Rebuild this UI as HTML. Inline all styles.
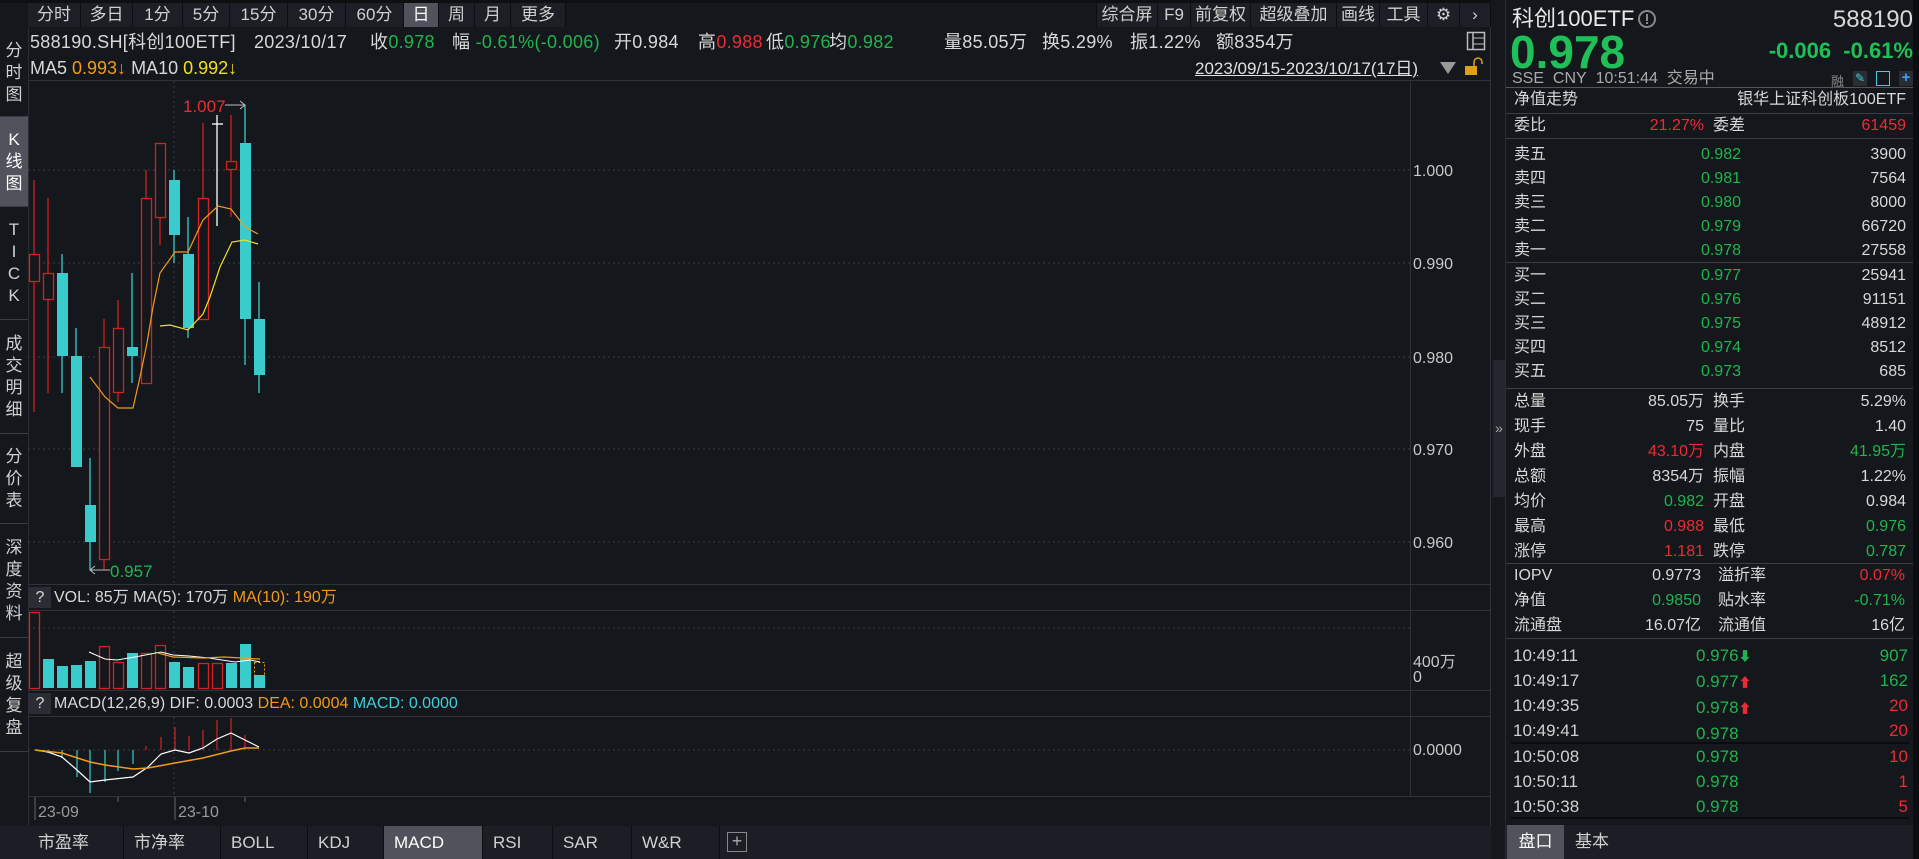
<!DOCTYPE html>
<html><head><meta charset="utf-8"><style>
*{margin:0;padding:0;box-sizing:border-box}
body{width:1919px;height:859px;background:#14171c;overflow:hidden;position:relative;font-family:"Liberation Sans","Noto Sans CJK SC",sans-serif;color:#d8d8d8}
.a{position:absolute;white-space:nowrap}
.tab{position:absolute;top:3px;height:24px;background:#1c1f25;border-right:1px solid #0c0d10;font-size:17px;line-height:24px;text-align:center;color:#d0d0d0}
.side{position:absolute;left:0;width:28px;border-bottom:1px solid #3a3d44;font-size:17px;line-height:22px;text-align:center;color:#d0d0d0;display:flex;flex-direction:column;justify-content:center}
.r{color:#ee2a35}.g{color:#1fb54c}.o{color:#f39a1a}.y{color:#f0e020}.c{color:#3fd0d8}.w{color:#e8e8e8}.gr{color:#9a9a9a}
.rp{font-size:16px;line-height:20px}
.hl{position:absolute;height:1px;background:#3a3d44}
.bt{position:absolute;top:826px;height:33px;font-size:17px;line-height:33px;background:#1b1e24;border-right:1px solid #0c0d10;padding-left:10px;color:#d0d0d0}
.inf{position:absolute;white-space:nowrap;top:31px;font-size:18px;line-height:22px;letter-spacing:0.3px}
</style></head><body>

<div class="a" style="left:0;top:0;width:1491px;height:3px;background:#0e0f12"></div>
<div class="tab" style="left:28px;width:53px">分时</div>
<div class="tab" style="left:81px;width:52px">多日</div>
<div class="tab" style="left:133px;width:50px">1分</div>
<div class="tab" style="left:183px;width:47px">5分</div>
<div class="tab" style="left:230px;width:58px">15分</div>
<div class="tab" style="left:288px;width:58px">30分</div>
<div class="tab" style="left:346px;width:58px">60分</div>
<div class="tab" style="left:404px;width:35px;background:#50535b;color:#fff">日</div>
<div class="tab" style="left:439px;width:36px">周</div>
<div class="tab" style="left:475px;width:36px">月</div>
<div class="tab" style="left:511px;width:55px">更多</div>

<div class="tab" style="left:1096px;width:62px;border-left:1px solid #0c0d10">综合屏</div>
<div class="tab" style="left:1158px;width:33px">F9</div>
<div class="tab" style="left:1191px;width:60px">前复权</div>
<div class="tab" style="left:1251px;width:86px">超级叠加</div>
<div class="tab" style="left:1337px;width:43px">画线</div>
<div class="tab" style="left:1380px;width:48px">工具</div>
<div class="tab" style="left:1428px;width:32px">⚙</div>
<div class="tab" style="left:1460px;width:31px">›</div>

<div class="side" style="top:30px;height:87px">分<br>时<br>图</div>
<div class="side" style="top:117px;height:90px;background:#50535b;color:#fff">K<br>线<br>图</div>
<div class="side" style="top:207px;height:113px">T<br>I<br>C<br>K</div>
<div class="side" style="top:320px;height:114px">成<br>交<br>明<br>细</div>
<div class="side" style="top:434px;height:90px">分<br>价<br>表</div>
<div class="side" style="top:524px;height:114px">深<br>度<br>资<br>料</div>
<div class="side" style="top:638px;height:114px">超<br>级<br>复<br>盘</div>
<div class="a" style="left:28px;top:28px;width:1px;height:798px;background:#2a2d34"></div>

<div class="inf" style="left:30px">588190.SH[科创100ETF]</div>
<div class="inf" style="left:254px">2023/10/17</div>
<div class="inf" style="left:370px">收<span class="g">0.978</span></div>
<div class="inf" style="left:452px">幅 <span class="g">-0.61%(-0.006)</span></div>
<div class="inf" style="left:614px">开0.984</div>
<div class="inf" style="left:698px">高<span class="r">0.988</span></div>
<div class="inf" style="left:766px">低<span class="g">0.976</span></div>
<div class="inf" style="left:829px">均<span class="g">0.982</span></div>
<div class="inf" style="left:944px">量85.05万</div>
<div class="inf" style="left:1042px">换5.29%</div>
<div class="inf" style="left:1130px">振1.22%</div>
<div class="inf" style="left:1216px">额8354万</div>
<div class="a" style="top:57px;font-size:18px;line-height:22px;left:30px">MA5 <span class="o">0.993↓</span> MA10 <span class="y">0.992↓</span></div>
<div class="a" style="top:59px;font-size:17px;line-height:20px;left:1195px;text-decoration:underline;color:#e0e0e0">2023/09/15-2023/10/17(17日)</div>

<svg class="a" style="left:0;top:0" width="1491" height="859">
 <rect x="1467.5" y="32.5" width="17" height="17" fill="none" stroke="#bbb" stroke-width="1.5"/><line x1="1473" y1="33" x2="1473" y2="49" stroke="#bbb" stroke-width="1.5"/><line x1="1473" y1="38" x2="1484" y2="38" stroke="#bbb"/><line x1="1473" y1="44" x2="1484" y2="44" stroke="#bbb"/>
 <polygon points="1440,62 1456,62 1448,74" fill="#999"/>
 <rect x="1465" y="66" width="12" height="9" fill="#e0a010"/><path d="M1474 66 v-4 a4 4 0 0 1 8 0 v2" fill="none" stroke="#e0a010" stroke-width="1.5"/>
 <g stroke="#2f323a" stroke-width="1">
  <line x1="28" y1="80.5" x2="1491" y2="80.5"/>
  <line x1="1410.5" y1="80" x2="1410.5" y2="796"/>
  <line x1="28" y1="584.5" x2="1491" y2="584.5"/>
  <line x1="28" y1="610.5" x2="1491" y2="610.5"/>
  <line x1="28" y1="690.5" x2="1491" y2="690.5"/>
  <line x1="28" y1="716.5" x2="1491" y2="716.5"/>
  <line x1="28" y1="796.5" x2="1491" y2="796.5"/>
  <line x1="1490.5" y1="27" x2="1490.5" y2="859"/>
 </g>
 <g stroke="#3a3d44" stroke-dasharray="2,3">
  <line x1="28" y1="170" x2="1410" y2="170"/><line x1="28" y1="263" x2="1410" y2="263"/><line x1="28" y1="357" x2="1410" y2="357"/><line x1="28" y1="449" x2="1410" y2="449"/><line x1="28" y1="542" x2="1410" y2="542"/>
  <line x1="174" y1="81" x2="174" y2="584"/><line x1="174" y1="611" x2="174" y2="690"/><line x1="174" y1="717" x2="174" y2="796"/>
  <line x1="28" y1="628" x2="1410" y2="628"/><line x1="28" y1="750" x2="1410" y2="750"/>
 </g>
 <g stroke-width="1.3">
  <line x1="34" y1="180" x2="34" y2="412" stroke="#d42020"/><rect x="29.5" y="254.5" width="10" height="27" fill="#14171c" stroke="#d42020"/>
  <line x1="48" y1="198" x2="48" y2="393" stroke="#d42020"/><rect x="43.5" y="273.5" width="10" height="26" fill="#14171c" stroke="#d42020"/>
  <line x1="62" y1="254" x2="62" y2="393" stroke="#3acccc"/><rect x="57" y="273" width="11" height="83" fill="#3acccc"/>
  <line x1="76" y1="328" x2="76" y2="467" stroke="#3acccc"/><rect x="71" y="356" width="11" height="111" fill="#3acccc"/>
  <line x1="90" y1="458" x2="90" y2="570" stroke="#3acccc"/><rect x="85" y="505" width="11" height="37" fill="#3acccc"/>
  <line x1="104" y1="319" x2="104" y2="570" stroke="#d42020"/><rect x="99.5" y="347.5" width="10" height="212" fill="#14171c" stroke="#d42020"/>
  <line x1="118" y1="300" x2="118" y2="402" stroke="#d42020"/><rect x="113.5" y="328.5" width="10" height="64" fill="#14171c" stroke="#d42020"/>
  <line x1="132" y1="273" x2="132" y2="383" stroke="#3acccc"/><rect x="127" y="347" width="11" height="9" fill="#3acccc"/>
  <line x1="146" y1="170" x2="146" y2="383" stroke="#d42020"/><rect x="141.5" y="198.5" width="10" height="185" fill="#14171c" stroke="#d42020"/>
  <line x1="160" y1="143" x2="160" y2="245" stroke="#d42020"/><rect x="155.5" y="143.5" width="10" height="74" fill="#14171c" stroke="#d42020"/>
  <line x1="174" y1="170" x2="174" y2="263" stroke="#3acccc"/><rect x="169" y="180" width="11" height="55" fill="#3acccc"/>
  <line x1="188" y1="217" x2="188" y2="338" stroke="#3acccc"/><rect x="183" y="254" width="11" height="74" fill="#3acccc"/>
  <line x1="203" y1="123" x2="203" y2="319" stroke="#d42020"/><rect x="198.5" y="198.5" width="10" height="121" fill="#14171c" stroke="#d42020"/>
  <line x1="217" y1="115" x2="217" y2="226" stroke="#fff"/><line x1="212" y1="124" x2="223" y2="124" stroke="#fff"/>
  <line x1="231" y1="115" x2="231" y2="217" stroke="#d42020"/><rect x="226.5" y="161.5" width="10" height="8" fill="#14171c" stroke="#d42020"/>
  <line x1="245" y1="105" x2="245" y2="365" stroke="#3acccc"/><rect x="240" y="143" width="11" height="176" fill="#3acccc"/>
  <line x1="259" y1="282" x2="259" y2="393" stroke="#3acccc"/><rect x="254" y="319" width="11" height="56" fill="#3acccc"/>
 </g>
 <polyline fill="none" stroke="#f39a1a" stroke-width="1.2" points="90,377 105,397 118,408 133,408 140,377 147,343 153,307 160,273 175,252 188,252 203,220 218,206 231,209 245,227 258,234"/>
 <polyline fill="none" stroke="#f0e020" stroke-width="1.2" points="160,326 170,325 188,330 203,314 210,297 220,267 232,242 245,240 258,244"/>
 <text x="183" y="112" fill="#ee2a35" font-size="17" font-family="Liberation Sans">1.007</text>
 <path d="M225 105 H245 M240 101 L245 105 L240 109" stroke="#bbb" fill="none"/>
 <text x="110" y="577" fill="#1fb54c" font-size="17" font-family="Liberation Sans">0.957</text>
 <path d="M110 570 H90 M95 566 L90 570 L95 574" stroke="#bbb" fill="none"/>
 <g fill="#c8c8c8" font-size="16" font-family="Liberation Sans">
  <text x="1413" y="176">1.000</text><text x="1413" y="269">0.990</text><text x="1413" y="363">0.980</text><text x="1413" y="455">0.970</text><text x="1413" y="548">0.960</text>
  <text x="1413" y="667">400万</text><text x="1413" y="682">0</text><text x="1413" y="755">0.0000</text>
 </g>
 <g stroke-width="1.3">
  <rect x="29.5" y="612.5" width="10" height="76" fill="none" stroke="#d42020"/>
  <rect x="43" y="659" width="11" height="29" fill="#3acccc"/>
  <rect x="57" y="666" width="11" height="22" fill="#3acccc"/>
  <rect x="71" y="665" width="11" height="23" fill="#3acccc"/>
  <rect x="85" y="661" width="11" height="27" fill="#3acccc"/>
  <rect x="99.5" y="646.5" width="10" height="42" fill="none" stroke="#d42020"/>
  <rect x="113.5" y="662.5" width="10" height="26" fill="none" stroke="#d42020"/>
  <rect x="127" y="653" width="11" height="35" fill="#3acccc"/>
  <rect x="141.5" y="653.5" width="10" height="35" fill="none" stroke="#d42020"/>
  <rect x="155.5" y="645.5" width="10" height="43" fill="none" stroke="#d42020"/>
  <rect x="169" y="662" width="11" height="26" fill="#3acccc"/>
  <rect x="183" y="667" width="11" height="21" fill="#3acccc"/>
  <rect x="198.5" y="663.5" width="10" height="25" fill="none" stroke="#d42020"/>
  <rect x="212.5" y="663.5" width="10" height="25" fill="none" stroke="#d42020"/>
  <rect x="226" y="663" width="11" height="25" fill="#3acccc"/>
  <rect x="240" y="644" width="11" height="44" fill="#3acccc"/>
  <rect x="254" y="675" width="11" height="13" fill="#3acccc"/>
  <rect x="254.5" y="662.5" width="10" height="13" fill="none" stroke="#f39a1a" stroke-dasharray="2,2" stroke-width="1"/>
 </g>
 <polyline fill="none" stroke="#fff" stroke-width="1" points="89,652 105,659 117,660 135,657 161,652 173,655 189,656 209,658 235,662 250,660 260,662"/>
 <polyline fill="none" stroke="#f39a1a" stroke-width="1.2" points="158,653 173,657 204,658 224,657 242,658 260,659"/>
 <g stroke="#3acccc" stroke-width="1.2">
  <line x1="48" y1="750" x2="48" y2="753"/><line x1="62" y1="750" x2="62" y2="758"/><line x1="77" y1="750" x2="77" y2="777"/><line x1="90" y1="750" x2="90" y2="793"/><line x1="105" y1="750" x2="105" y2="782"/><line x1="118" y1="750" x2="118" y2="771"/><line x1="133" y1="750" x2="133" y2="764"/>
 </g>
 <g stroke="#d42020" stroke-width="1.2">
  <line x1="146" y1="750" x2="146" y2="746"/><line x1="161" y1="750" x2="161" y2="737"/><line x1="175" y1="750" x2="175" y2="727"/><line x1="189" y1="750" x2="189" y2="736"/><line x1="203" y1="750" x2="203" y2="730"/><line x1="217" y1="750" x2="217" y2="720"/><line x1="231" y1="750" x2="231" y2="718"/><line x1="245" y1="750" x2="245" y2="735"/>
 </g>
 <polyline fill="none" stroke="#fff" stroke-width="1.2" points="35,750 48,752 62,757 77,770 90,782 105,780 133,777 148,767 161,754 175,750 189,753 203,748 217,739 231,733 245,740 259,747"/>
 <polyline fill="none" stroke="#f39a1a" stroke-width="1.5" points="35,750 62,753 90,762 105,765 133,769 148,768 175,763 203,758 231,751 245,748 259,748"/>
 <g stroke="#666"><line x1="35" y1="797" x2="35" y2="820"/><line x1="118" y1="797" x2="118" y2="802"/><line x1="175" y1="797" x2="175" y2="820"/><line x1="245" y1="797" x2="245" y2="802"/></g>
 <g fill="#9a9a9a" font-size="16" font-family="Liberation Sans"><text x="38" y="817">23-09</text><text x="178" y="817">23-10</text></g>
</svg>

<div class="a" style="left:29px;top:587px;width:22px;height:21px;background:#2a2d34;font-size:16px;line-height:21px;text-align:center">?</div>
<div class="a" style="left:54px;top:587px;font-size:16px;line-height:21px">VOL: 85万 MA(5): 170万 <span class="o">MA(10): 190万</span></div>
<div class="a" style="left:29px;top:693px;width:22px;height:21px;background:#2a2d34;font-size:16px;line-height:21px;text-align:center">?</div>
<div class="a" style="left:54px;top:693px;font-size:16px;line-height:21px">MACD(12,26,9) DIF: 0.0003 <span class="o">DEA: 0.0004</span> <span class="c">MACD: 0.0000</span></div>

<div class="a" style="left:0;top:826px;width:1491px;height:33px;background:#1b1e24"></div>
<div class="bt" style="left:28px;width:96px">市盈率</div>
<div class="bt" style="left:124px;width:97px">市净率</div>
<div class="bt" style="left:221px;width:87px">BOLL</div>
<div class="bt" style="left:308px;width:76px">KDJ</div>
<div class="bt" style="left:384px;width:99px;background:#50535b;color:#fff">MACD</div>
<div class="bt" style="left:483px;width:70px">RSI</div>
<div class="bt" style="left:553px;width:79px">SAR</div>
<div class="bt" style="left:632px;width:88px">W&amp;R</div>
<div class="a" style="left:727px;top:832px;width:20px;height:20px;border:1px solid #888;color:#aaa;font-size:18px;line-height:17px;text-align:center">+</div>

<div class="a" style="left:1493px;top:360px;width:12px;height:137px;background:#23262d;color:#aaa;font-size:14px;line-height:137px;text-align:center">»</div>
<div class="a" style="left:1505px;top:0;width:1px;height:859px;background:#2a2d34"></div>
<div class="a" style="left:1913px;top:0;width:6px;height:859px;background:#0c0d10"></div>
<div class="a w" style="left:1512px;top:6px;font-size:22px;line-height:26px">科创100ETF</div>
<svg class="a" style="left:1637px;top:9px" width="20" height="20"><circle cx="10" cy="10" r="8" fill="none" stroke="#888" stroke-width="2"/><rect x="9" y="5" width="2" height="7" fill="#888"/><rect x="9" y="13" width="2" height="2" fill="#888"/></svg>
<div class="a" style="right:6px;top:6px;font-size:24px;line-height:28px;color:#d8d8d8">588190</div>
<div class="a g" style="left:1510px;top:28px;font-size:46px;line-height:48px;font-weight:bold;color:#20c058">0.978</div>
<div class="a" style="right:6px;top:39px;font-size:22px;line-height:24px;font-weight:bold;color:#20c058">-0.006&nbsp; -0.61%</div>
<div class="a gr" style="left:1512px;top:70px;font-size:16px;line-height:18px;color:#aaa">SSE&nbsp; CNY&nbsp; 10:51:44&nbsp; 交易中</div>
<div class="a" style="left:1831px;top:71px;font-size:13px;color:#888">融</div>
<div class="a" style="left:1853px;top:71px;width:14px;height:15px;background:#2a2d34;color:#3fd0d8;font-size:12px;text-align:center">✎</div>
<div class="a" style="left:1876px;top:71px;width:14px;height:15px;border:1px solid #3fd0d8"></div>
<div class="a" style="left:1899px;top:71px;width:14px;height:15px;background:#2a2d34;color:#3fa0ff;font-size:15px;line-height:14px;text-align:center;font-weight:bold">+</div>

<div class="hl" style="left:1506px;top:87px;width:407px;background:#555"></div>
<div class="a rp" style="left:1514px;top:90px">净值走势</div>
<div class="a rp" style="right:13px;top:90px">银华上证科创板100ETF</div>
<div class="hl" style="left:1506px;top:113px;width:407px"></div>
<div class="a rp" style="left:1514px;top:116px">委比</div><div class="a rp r" style="right:215px;top:116px">21.27%</div><div class="a rp" style="left:1713px;top:116px">委差</div><div class="a rp r" style="right:13px;top:116px">61459</div>
<div class="hl" style="left:1506px;top:138px;width:407px"></div>

<div class="a rp" style="left:1514px;top:143px;line-height:24px">卖五<br>卖四<br>卖三<br>卖二<br>卖一</div>
<div class="a rp g" style="right:178px;top:143px;line-height:24px;text-align:right">0.982<br>0.981<br>0.980<br>0.979<br>0.978</div>
<div class="a rp" style="right:13px;top:143px;line-height:24px;text-align:right">3900<br>7564<br>8000<br>66720<br>27558</div>
<div class="hl" style="left:1506px;top:262px;width:407px"></div>
<div class="a rp" style="left:1514px;top:264px;line-height:24px">买一<br>买二<br>买三<br>买四<br>买五</div>
<div class="a rp g" style="right:178px;top:264px;line-height:24px;text-align:right">0.977<br>0.976<br>0.975<br>0.974<br>0.973</div>
<div class="a rp" style="right:13px;top:264px;line-height:24px;text-align:right">25941<br>91151<br>48912<br>8512<br>685</div>
<div class="hl" style="left:1506px;top:388px;width:407px"></div>

<div class="a rp" style="left:1514px;top:389px;line-height:25px">总量<br>现手<br>外盘<br>总额<br>均价<br>最高<br>涨停</div>
<div class="a rp" style="right:215px;top:389px;line-height:25px;text-align:right">85.05万<br>75<br><span class="r">43.10万</span><br>8354万<br><span class="g">0.982</span><br><span class="r">0.988</span><br><span class="r">1.181</span></div>
<div class="a rp" style="left:1713px;top:389px;line-height:25px">换手<br>量比<br>内盘<br>振幅<br>开盘<br>最低<br>跌停</div>
<div class="a rp" style="right:13px;top:389px;line-height:25px;text-align:right">5.29%<br>1.40<br><span class="g">41.95万</span><br>1.22%<br>0.984<br><span class="g">0.976</span><br><span class="g">0.787</span></div>
<div class="hl" style="left:1506px;top:563px;width:407px"></div>
<div class="a rp" style="left:1514px;top:563px;line-height:25px">IOPV<br>净值<br>流通盘</div>
<div class="a rp" style="right:218px;top:563px;line-height:25px;text-align:right">0.9773<br><span class="g">0.9850</span><br>16.07亿</div>
<div class="a rp" style="left:1718px;top:563px;line-height:25px">溢折率<br>贴水率<br>流通值</div>
<div class="a rp" style="right:14px;top:563px;line-height:25px;text-align:right"><span class="r">0.07%</span><br><span class="g">-0.71%</span><br>16亿</div>
<div class="hl" style="left:1506px;top:638px;width:407px"></div>

<div class="a" style="left:1513px;top:643px;font-size:17px;line-height:25px;color:#d0d0d0">10:49:11<br>10:49:17<br>10:49:35<br>10:49:41</div>
<div class="a g" style="left:1696px;top:643px;font-size:17px;line-height:25px">0.976<span style="font-size:13px">⬇</span><br>0.977<span class="r" style="font-size:13px">⬆</span><br>0.978<span class="r" style="font-size:13px">⬆</span><br>0.978</div>
<div class="a" style="right:11px;top:643px;font-size:17px;line-height:25px;text-align:right"><span class="g">907</span><br><span class="g">162</span><br><span class="r">20</span><br><span class="r">20</span></div>
<div class="hl" style="left:1511px;top:742px;width:398px;background:#0a0b0d;height:2px"></div>
<div class="a" style="left:1513px;top:744px;font-size:17px;line-height:25px;color:#d0d0d0">10:50:08<br>10:50:11<br>10:50:38</div>
<div class="a g" style="left:1696px;top:744px;font-size:17px;line-height:25px">0.978<br>0.978<br>0.978</div>
<div class="a r" style="right:11px;top:744px;font-size:17px;line-height:25px;text-align:right">10<br>1<br>5</div>
<div class="hl" style="left:1511px;top:817px;width:398px;background:#0a0b0d;height:2px"></div>

<div class="a" style="left:1506px;top:825px;width:407px;height:34px;background:#1b1e24"></div>
<div class="a" style="left:1507px;top:825px;width:57px;height:34px;background:#50535b;color:#fff;font-size:17px;line-height:34px;text-align:center">盘口</div>
<div class="a" style="left:1575px;top:825px;font-size:17px;line-height:34px;color:#d0d0d0">基本</div>
</body></html>
